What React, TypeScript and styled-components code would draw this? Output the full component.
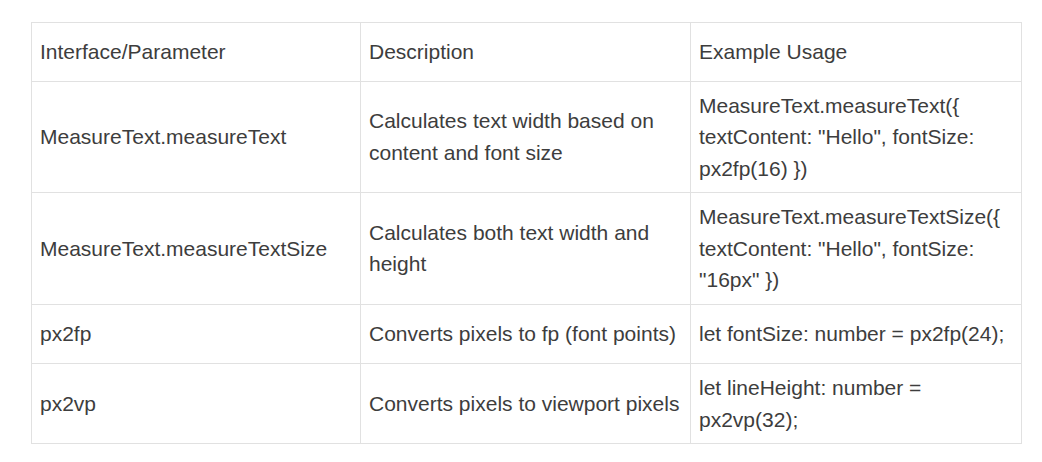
import React from "react";
import styled, { createGlobalStyle } from "styled-components";

const GlobalStyle = createGlobalStyle`
  html, body {
    margin: 0;
    padding: 0;
    background: #fff;
  }
`;

const Page = styled.div`
  padding: 22px 21px 0 31px;
  font-family: "Liberation Sans", Arial, sans-serif;
  color: #3d3d3d;
`;

const Table = styled.table`
  width: 990px;
  border-collapse: collapse;
  table-layout: fixed;
  font-size: 21px;
  line-height: 31.5px;
`;

const Col = styled.col<{ w: number }>`
  width: ${({ w }) => w}px;
`;

const Row = styled.tr``;

const Cell = styled.td<{ head?: boolean }>`
  border: 1px solid #e1e1e1;
  padding: 8px 8px;
  height: ${({ head }) => (head ? "41.5px" : "42.5px")};
  vertical-align: middle;
  text-align: left;
  font-weight: 400;
`;

const rows = [
  {
    name: "MeasureText.measureText",
    desc: "Calculates text width based on content and font size",
    usage: 'MeasureText.measureText({ textContent: "Hello", fontSize: px2fp(16) })',
  },
  {
    name: "MeasureText.measureTextSize",
    desc: "Calculates both text width and height",
    usage: 'MeasureText.measureTextSize({ textContent: "Hello", fontSize: "16px" })',
  },
  {
    name: "px2fp",
    desc: "Converts pixels to fp (font points)",
    usage: "let fontSize: number = px2fp(24);",
  },
  {
    name: "px2vp",
    desc: "Converts pixels to viewport pixels",
    usage: "let lineHeight: number = px2vp(32);",
  },
];

const App = () => {
  return (
    <Page>
      <GlobalStyle />
      <Table>
        <colgroup>
          <Col w={329} />
          <Col w={330} />
          <Col w={331} />
        </colgroup>
        <thead>
          <Row>
            <Cell as="th" head>Interface/Parameter</Cell>
            <Cell as="th" head>Description</Cell>
            <Cell as="th" head>Example Usage</Cell>
          </Row>
        </thead>
        <tbody>
          {rows.map((r) => (
            <Row key={r.name}>
              <Cell>{r.name}</Cell>
              <Cell>{r.desc}</Cell>
              <Cell>{r.usage}</Cell>
            </Row>
          ))}
        </tbody>
      </Table>
    </Page>
  );
};

export default App;
